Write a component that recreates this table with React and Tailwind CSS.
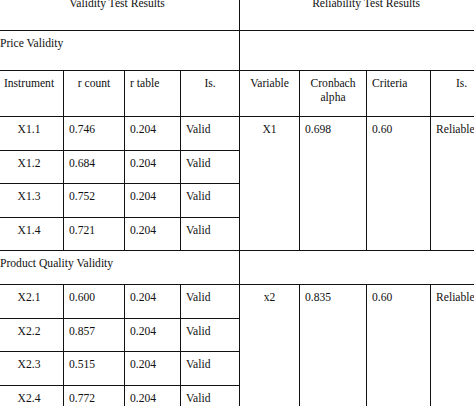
import React from "react";

const cell = "border-[1.5px] border-[#111] align-top pt-[6px] px-[5px] leading-[14px]";

const groups = [
  {
    title: "Price Validity",
    variable: "X1",
    alpha: "0.698",
    rows: [
      ["X1.1", "0.746"],
      ["X1.2", "0.684"],
      ["X1.3", "0.752"],
      ["X1.4", "0.721"],
    ],
  },
  {
    title: "Product Quality Validity",
    variable: "x2",
    alpha: "0.835",
    rows: [
      ["X2.1", "0.600"],
      ["X2.2", "0.857"],
      ["X2.3", "0.515"],
      ["X2.4", "0.772"],
    ],
  },
];

export default function App() {
  return (
    <div className="w-[474px] h-[406px] overflow-hidden bg-white">
      <table
        className="table-fixed border-collapse w-[498px] -ml-[6px] -mt-[10px] text-[11.6px] text-[#111]"
        style={{ fontFamily: '"Liberation Serif", "Times New Roman", serif' }}
      >
        <colgroup>
          <col className="w-[69px]" />
          <col className="w-[61px]" />
          <col className="w-[56px]" />
          <col className="w-[59px]" />
          <col className="w-[60px]" />
          <col className="w-[67px]" />
          <col className="w-[64px]" />
          <col className="w-[62px]" />
        </colgroup>
        <tbody>
          <tr className="h-[40px]">
            <td colSpan={4} className={`${cell} text-center`}>Validity Test Results</td>
            <td colSpan={4} className={`${cell} text-center`}>Reliability Test Results</td>
          </tr>
          {groups.map((g, gi) => (
            <React.Fragment key={g.title}>
              <tr className={gi === 0 ? "h-[40px]" : "h-[33.6px]"}>
                <td colSpan={4} className={`${cell} text-left`}>{g.title}</td>
                <td colSpan={4} className={cell}></td>
              </tr>
              {gi === 0 && (
                <tr className="h-[46px]">
                  <td className={`${cell} text-center`}>Instrument</td>
                  <td className={`${cell} text-center`}>r count</td>
                  <td className={`${cell} text-left`}>r table</td>
                  <td className={`${cell} text-center`}>Is.</td>
                  <td className={`${cell} text-center`}>Variable</td>
                  <td className={`${cell} text-center`}>Cronbach<br />alpha</td>
                  <td className={`${cell} text-left`}>Criteria</td>
                  <td className={`${cell} text-center`}>Is.</td>
                </tr>
              )}
              {g.rows.map((r, ri) => (
                <tr key={r[0]} className="h-[33.6px]">
                  <td className={`${cell} text-center`}>{r[0]}</td>
                  <td className={`${cell} text-left`}>{r[1]}</td>
                  <td className={`${cell} text-left`}>0.204</td>
                  <td className={`${cell} text-left`}>Valid</td>
                  {ri === 0 && (
                    <>
                      <td rowSpan={4} className={`${cell} text-center`}>{g.variable}</td>
                      <td rowSpan={4} className={`${cell} text-left`}>{g.alpha}</td>
                      <td rowSpan={4} className={`${cell} text-left`}>0.60</td>
                      <td rowSpan={4} className={`${cell} text-left`}>Reliable</td>
                    </>
                  )}
                </tr>
              ))}
            </React.Fragment>
          ))}
        </tbody>
      </table>
    </div>
  );
}
